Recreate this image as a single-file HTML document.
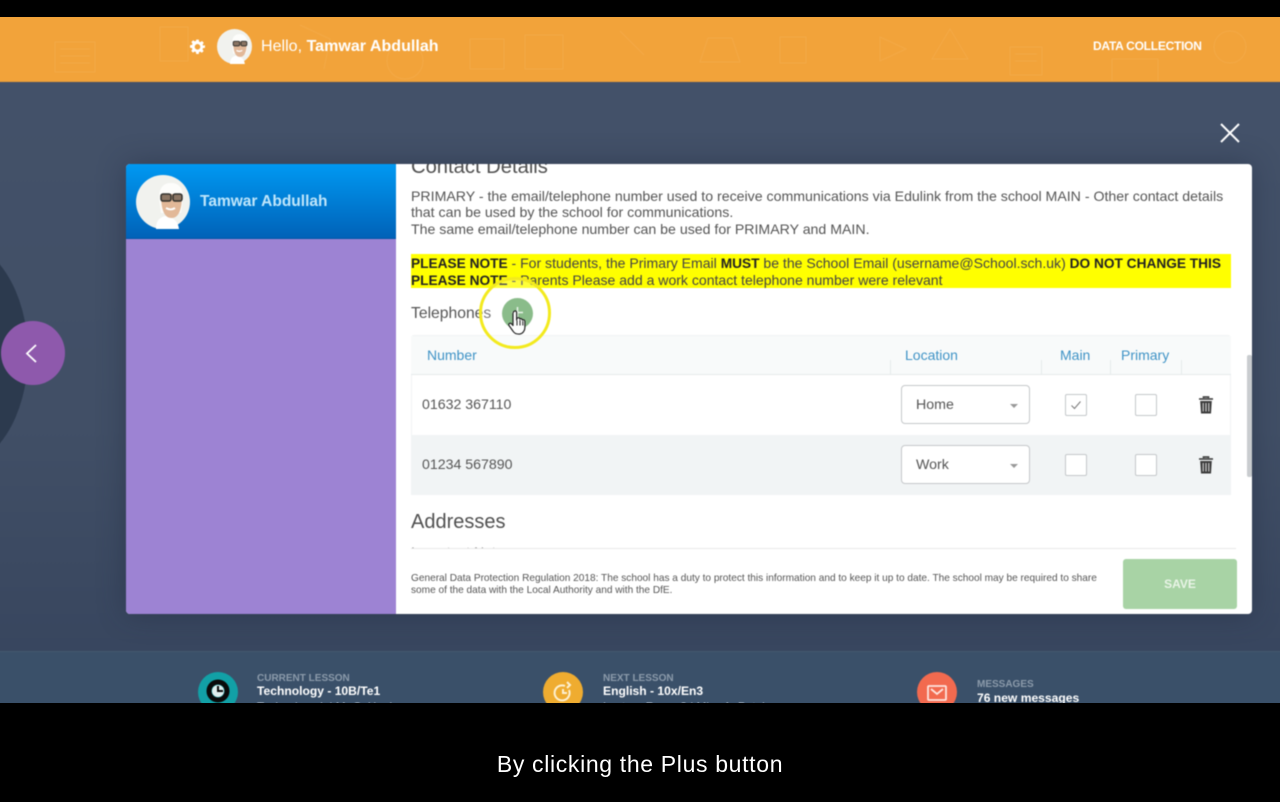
<!DOCTYPE html>
<html lang="en"><head><meta charset="utf-8"><title>Data Collection</title>
<style>
*{box-sizing:border-box}
html,body{margin:0;padding:0;width:1280px;height:802px;overflow:hidden;background:#000;font-family:"Liberation Sans",sans-serif}
.a{position:absolute;white-space:nowrap}
#stage{position:absolute;left:0;top:0;width:1280px;height:802px;overflow:hidden;background:#000}
#clip{position:absolute;left:0;top:17px;width:1280px;height:686px;overflow:hidden}
#app{position:absolute;left:-6px;top:-6px;width:1292px;height:698px;overflow:hidden;background:linear-gradient(#44526a,#414f66 60%,#36445d);filter:blur(.4px)}
.t{color:#555;font-size:14.15px;line-height:17px}
.n{color:#444;font-size:14.05px;line-height:17px}
.n b{color:#222;font-size:13.7px}
.th{color:#3f93c6;font-size:14px}
.chk{position:absolute;width:22px;height:22px;background:#fff;border:1px solid #c4c8ca;border-radius:2px}
.sel{position:absolute;left:901px;width:129px;height:39px;background:#fff;border:1px solid #c5c8ca;border-radius:4px}
.sel span{position:absolute;left:14px;top:11px;font-size:14.2px;color:#555}
.sel i{position:absolute;left:108px;top:18px;border:4px solid transparent;border-top:4px solid #999;border-bottom:0}
.lbl{font-size:10px;font-weight:bold;color:#8c9bab}
.val{font-size:12.1px;font-weight:bold;color:#fff}
.sub{font-size:11.8px;color:#c6d0da}
</style></head>
<body>
<div id="stage">
<div id="clip">
<div id="app">
 <div style="position:absolute;left:6px;top:-11px;width:1280px;height:802px">
  <!-- header -->
  <div class="a" style="left:-6px;top:11px;width:1292px;height:71px;background:#f2a33a;border-bottom:1px solid #e89c38"></div>
  <svg class="a" style="left:0;top:17px" width="1280" height="64" fill="none" stroke="#f7ba68" stroke-width="1" opacity=".28">
   <rect x="55" y="25" width="40" height="30"/><path d="M60 32h30M60 39h30M60 46h30"/><rect x="160" y="10" width="28" height="34"/><circle cx="405" cy="44" r="18"/><rect x="525" y="18" width="38" height="34"/><path d="M700 45h40l-8-24h-24zM880 20l26 12-26 12z"/><rect x="1010" y="30" width="32" height="28"/><path d="M1015 37h22M1015 44h22"/><rect x="1112" y="42" width="46" height="24"/><circle cx="1230" cy="30" r="16"/><path d="M300 8l30 14-6 30M470 22h34v30h-34zM620 14l24 24M780 20h26v26h-26zM950 12l18 30h-36z"/>
  </svg>
  <svg class="a" style="left:190px;top:39px" width="15" height="15" viewBox="0 0 24 24"><path fill="#fff" fill-rule="evenodd" d="M10 1h4l.6 3.200 1.900.8 2.700-1.800 2.800 2.800-1.800 2.700.8 1.900L24 10v4l-3.200.6-.8 1.900 1.800 2.700-2.800 2.800-2.700-1.800-1.900.8L14 24h-4l-.6-3.200-1.900-.8-2.700 1.800L2 19l1.800-2.700-.8-1.900L0 14v-4l3.200-.6.8-1.900L2.200 4.800 5 2l2.700 1.800 1.900-.8zM12 8a4.500 4.500 0 1 0 0 9a4.500 4.500 0 0 0 0-9z"/></svg>
  <svg class="a" style="left:217px;top:29px" width="35" height="35" viewBox="0 0 54 54">
   <circle cx="27" cy="27" r="27" fill="#f1f2ee"/><path d="M20 54c0-8 3-11 9-13 8 1 13 5 14 13z" fill="#fff"/><path d="M23 24c0-11 4-16 12-16s12 5 12 16l-2 14H25z" fill="#fdfdfb"/><path d="M25 19h21c0 15-3 24-10.500 24S25 34 25 19z" fill="#e2b898"/><rect x="25" y="19" width="10" height="7" rx="2" fill="#8b7563" stroke="#33322e" stroke-width="1.500"/><rect x="37" y="19" width="9" height="7" rx="2" fill="#8b7563" stroke="#33322e" stroke-width="1.500"/><path d="M30 33c3.500 2 6 2 9 0" stroke="#fff" stroke-width="2" fill="none"/>
  </svg>
  <div class="a" style="left:261px;top:38px;font-size:16px;color:#fff;letter-spacing:.03px">Hello, <b>Tamwar Abdullah</b></div>
  <div class="a" style="left:1093px;top:39px;font-size:12px;font-weight:bold;color:#fff;letter-spacing:-.25px">DATA COLLECTION</div>
  <!-- close -->
  <svg class="a" style="left:1219px;top:122px" width="22" height="22"><path d="M2 2l18 18M20 2L2 20" stroke="#fff" stroke-width="2"/></svg>
  <!-- left dark circle + arrow -->
  <div class="a" style="left:-120px;top:240px;width:148px;height:228px;border-radius:50%;background:#2c3a4e"></div>
  <div class="a" style="left:1px;top:321px;width:64px;height:64px;border-radius:50%;background:#8e59ac"></div>
  <svg class="a" style="left:24px;top:343px" width="16" height="22"><path d="M12 2L3 10.500L12 19" fill="none" stroke="#fff" stroke-width="1.800"/></svg>
  <!-- modal -->
  <div class="a" style="left:126px;top:164px;width:1126px;height:450px;background:#fff;border-radius:4px;box-shadow:0 0 28px rgba(30,40,60,.45);overflow:hidden">
   <div class="a" style="left:0;top:0;width:270px;height:450px;background:#9d83d3"></div>
   <div class="a" style="left:0;top:0;width:270px;height:75px;background:linear-gradient(#0099f2,#0062b8);border-bottom:1px solid #0058a8"></div>
   <svg class="a" style="left:10px;top:11px" width="54" height="54" viewBox="0 0 54 54">
    <circle cx="27" cy="27" r="27" fill="#f1f2ee"/><path d="M20 54c0-8 3-11 9-13 8 1 13 5 14 13z" fill="#fff"/><path d="M23 24c0-11 4-16 12-16s12 5 12 16l-2 14H25z" fill="#fdfdfb"/><path d="M25 19h21c0 15-3 24-10.500 24S25 34 25 19z" fill="#e2b898"/><rect x="25" y="19" width="10" height="7" rx="2" fill="#8b7563" stroke="#33322e" stroke-width="1.500"/><rect x="37" y="19" width="9" height="7" rx="2" fill="#8b7563" stroke="#33322e" stroke-width="1.500"/><path d="M30 33c3.500 2 6 2 9 0" stroke="#fff" stroke-width="2" fill="none"/>
   </svg>
   <div class="a" style="left:74px;top:29px;font-size:15.5px;font-weight:bold;color:#bfe6fb">Tamwar Abdullah</div>
   <div class="a" style="left:285px;top:-8px;font-size:20.2px;color:#505050">Contact Details</div>
  </div>
  <div class="a t" style="left:411px;top:188px">PRIMARY - the email/telephone number used to receive communications via Edulink from the school MAIN - Other contact details</div>
  <div class="a t" style="left:411px;top:204px">that can be used by the school for communications.</div>
  <div class="a t" style="left:411px;top:221px">The same email/telephone number can be used for PRIMARY and MAIN.</div>
  <div class="a" style="left:411px;top:254px;width:820px;height:34px;background:#ffff00"></div>
  <div class="a n" style="left:411px;top:255px"><b>PLEASE NOTE</b> - For students, the Primary Email <b>MUST</b> be the School Email (username@School.sch.uk) <b>DO NOT CHANGE THIS</b></div>
  <div class="a n" style="left:411px;top:272px"><b>PLEASE NOTE</b> - Parents Please add a work contact telephone number were relevant</div>
  <div class="a" style="left:411px;top:305px;font-size:15.7px;color:#555">Telephones</div>
  <!-- table -->
  <div class="a" style="left:411px;top:335px;width:820px;height:160px;border:1px solid #f1f3f4;border-radius:3px"></div>
  <div class="a" style="left:411px;top:336px;width:820px;height:39px;background:#f8fafa;border-bottom:1px solid #e6eaeb"></div>
  <div class="a th" style="left:427px;top:347px">Number</div>
  <div class="a th" style="left:905px;top:347px">Location</div>
  <div class="a th" style="left:1060px;top:347px">Main</div>
  <div class="a th" style="left:1121px;top:347px">Primary</div>
  <div class="a" style="left:890px;top:360px;width:1px;height:14px;background:#e6eaeb"></div>
  <div class="a" style="left:1041px;top:360px;width:1px;height:14px;background:#e6eaeb"></div>
  <div class="a" style="left:1110px;top:360px;width:1px;height:14px;background:#e6eaeb"></div>
  <div class="a" style="left:1181px;top:360px;width:1px;height:14px;background:#e6eaeb"></div>
  <div class="a" style="left:411px;top:435px;width:820px;height:60px;background:#f1f4f5"></div>
  <div class="a t" style="left:422px;top:396px">01632 367110</div>
  <div class="a t" style="left:422px;top:456px">01234 567890</div>
  <div class="sel" style="top:385px"><span>Home</span><i></i></div>
  <div class="sel" style="top:445px"><span>Work</span><i></i></div>
  <div class="chk" style="left:1065px;top:394px"></div>
  <svg class="a" style="left:1069px;top:398px" width="14" height="14"><path d="M2.500 7.500l3 3L11.500 3.500" fill="none" stroke="#777" stroke-width="1"/></svg>
  <div class="chk" style="left:1135px;top:394px"></div>
  <div class="chk" style="left:1065px;top:454px"></div>
  <div class="chk" style="left:1135px;top:454px"></div>
  <svg class="a" style="left:1198px;top:396px" width="16" height="18" viewBox="0 0 16 18"><path d="M5.500 2V1h5v1M1 3h14" fill="none" stroke="#333" stroke-width="1.600"/><path d="M2.200 5h11.600l-.8 12.500H3z" fill="#3c3c3c"/><path d="M5.200 7v8.500M8 7v8.500M10.800 7v8.500" stroke="#ddd" stroke-width="1"/></svg>
  <svg class="a" style="left:1198px;top:456px" width="16" height="18" viewBox="0 0 16 18"><path d="M5.500 2V1h5v1M1 3h14" fill="none" stroke="#333" stroke-width="1.600"/><path d="M2.200 5h11.600l-.8 12.500H3z" fill="#3c3c3c"/><path d="M5.200 7v8.500M8 7v8.500M10.800 7v8.500" stroke="#ddd" stroke-width="1"/></svg>
  <!-- plus + highlight -->
  <div class="a" style="left:502px;top:298px;width:31px;height:31px;border-radius:50%;background:#6aa96a"></div>
  <svg class="a" style="left:510px;top:305px" width="15" height="15"><path d="M7.500 2v11M2 7.500h11" stroke="#e6f2e6" stroke-width="1.500"/></svg>
  <div class="a" style="left:479px;top:277px;width:72px;height:72px;border-radius:50%;border:3px solid #f3ea1e;background:rgba(255,255,255,.22)"></div>
  <svg class="a" style="left:508px;top:309px" width="20" height="27" viewBox="0 0 20 27"><path d="M6 2.500c1.200-1.200 2.600-.4 2.600 1V11l.6-2c1.500-.8 2.500 0 2.600 1 1.300-.8 2.500 0 2.500 1 1.300-.6 2.600.1 2.600 1.500v6c0 3-2 6-5 6.500-3 .3-5.500-.4-7-3L1 16.500c-.8-1.800 1-2.900 2.500-1.700L5 16.500V4c0-.6.400-1.100 1-1.500z" fill="#fff" stroke="#222" stroke-width="1.200" stroke-linejoin="round"/><path d="M9 11.500v5M12 11v5.500M14.800 12v4.500" stroke="#222" stroke-width="1" fill="none"/></svg>
  <div class="a" style="left:411px;top:511px;font-size:20px;color:#505050">Addresses</div>
  <div class="a" style="left:411px;top:544px;height:4px;overflow:hidden;font-size:14px;color:#555;line-height:16px">Important Note</div>
  <div class="a" style="left:411px;top:548px;width:825px;height:1px;background:#e8e8e8"></div>
  <div class="a" style="left:411px;top:573px;font-size:10.1px;line-height:12px;color:#555">General Data Protection Regulation 2018: The school has a duty to protect this information and to keep it up to date. The school may be required to share<br>some of the data with the Local Authority and with the DfE.</div>
  <div class="a" style="left:1123px;top:559px;width:114px;height:50px;background:#a8d3a5;border-radius:3px;color:#e9f4e7;font-size:12px;font-weight:bold;text-align:center;line-height:50px">SAVE</div>
  <!-- scrollbar -->
  <div class="a" style="left:1247px;top:355px;width:5px;height:122px;background:#c9cccf;border-radius:2px"></div>
  <!-- footer -->
  <div class="a" style="left:-6px;top:651px;width:1292px;height:70px;background:#3a5069;border-top:1px solid #43596f"></div>
  <div class="a" style="left:198px;top:672px;width:40px;height:40px;border-radius:50%;background:#12a0a6"></div>
  <svg class="a" style="left:206px;top:679px" width="24" height="24"><circle cx="12" cy="12" r="9" fill="#12a0a6" stroke="#0a0a0a" stroke-width="5"/><circle cx="12" cy="12" r="6" fill="#dfeeee"/><path d="M12 7v5h5" fill="none" stroke="#0a0a0a" stroke-width="2"/></svg>
  <div class="a lbl" style="left:257px;top:673px">CURRENT LESSON</div>
  <div class="a val" style="left:257px;top:684px">Technology - 10B/Te1</div>
  <div class="a sub" style="left:257px;top:700px">Technology L | Mr C. Hook</div>
  <div class="a" style="left:543px;top:672px;width:40px;height:40px;border-radius:50%;background:#efac30"></div>
  <svg class="a" style="left:552px;top:681px" width="22" height="22" fill="none" stroke="#fdf0d0" stroke-width="2"><path d="M17 9a7.500 7.500 0 1 1-4-4M11 8v4h4M15 1l3 3-3 3"/></svg>
  <div class="a lbl" style="left:603px;top:673px">NEXT LESSON</div>
  <div class="a val" style="left:603px;top:684px">English - 10x/En3</div>
  <div class="a sub" style="left:603px;top:700px">Lecture Room 3 | Miss A. Patel</div>
  <div class="a" style="left:917px;top:672px;width:40px;height:40px;border-radius:50%;background:#f26a4f"></div>
  <svg class="a" style="left:926px;top:684px" width="22" height="18" fill="none" stroke="#fde5df" stroke-width="1.800"><rect x="2" y="2" width="18" height="14" rx="1"/><path d="M5 5l6 5 6-5"/></svg>
  <div class="a lbl" style="left:977px;top:679px">MESSAGES</div>
  <div class="a val" style="left:977px;top:691px">76 new messages</div>
 </div>
</div>
</div>
<div class="a" style="left:0;top:751px;width:1280px;text-align:center;color:#fff;font-size:23px;letter-spacing:.66px">By clicking the Plus button</div>
</div>
</body></html>
